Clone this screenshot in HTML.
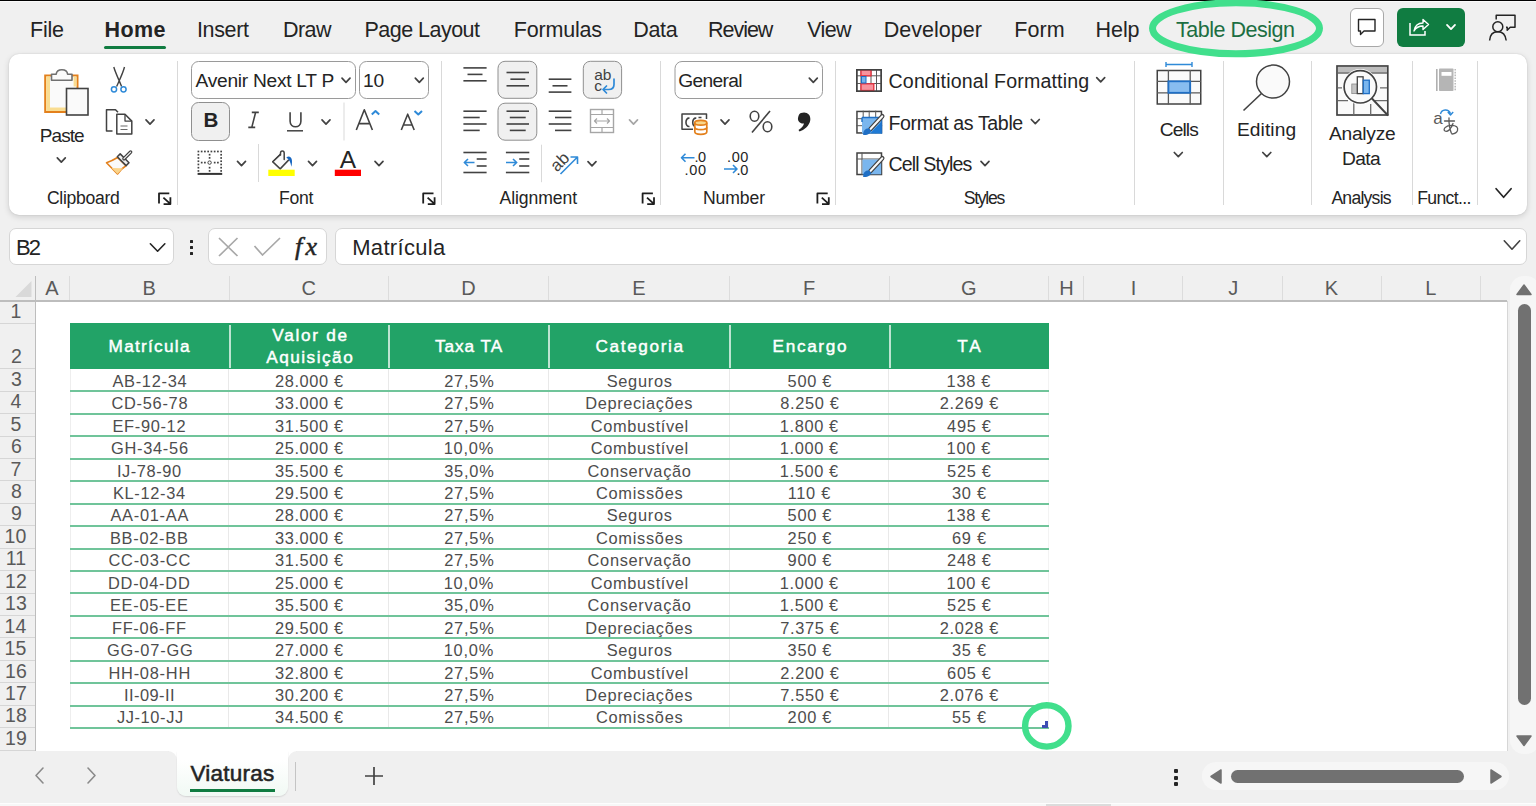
<!DOCTYPE html>
<html><head><meta charset="utf-8"><style>
html,body{margin:0;padding:0;}
body{width:1536px;height:806px;overflow:hidden;position:relative;background:#f0f0f0;font-family:"Liberation Sans", sans-serif;}
div{white-space:nowrap;line-height:normal;}
svg{overflow:visible;}
</style></head><body>
<div style="position:absolute;left:0px;top:0px;width:1536px;height:1px;background:#000"></div>
<div style="position:absolute;left:0px;top:1px;width:1536px;height:1px;background:#fafafa"></div>
<div style="position:absolute;left:104px;top:46px;width:62px;height:3px;background:#107c41;border-radius:2px"></div>
<div style="position:absolute;left:1349.5px;top:8.3px;width:34.5px;height:38.3px;background:#fff;border:1px solid #a8a8a8;border-radius:6px;box-sizing:border-box"></div>
<svg style="position:absolute;left:1357px;top:18px;" width="20" height="20" viewBox="0 0 20 20"><path d="M1.5 1.5 H18 V13 H7 L3.5 16.5 V13 H1.5 Z" fill="none" stroke="#242424" stroke-width="1.4" stroke-linejoin="round"/></svg>
<div style="position:absolute;left:1397px;top:8px;width:68px;height:39px;background:#107c41;border-radius:6px"></div>
<svg style="position:absolute;left:1407px;top:15px;" width="24" height="24" viewBox="0 0 24 24"><path d="M3 8 V20 H18 V16" fill="none" stroke="#fff" stroke-width="1.5"/><path d="M7 16 C8 10 12 8 16 8 V4.5 L21.5 9.5 L16 14.5 V11 C12 11 9 12.5 7 16 Z" fill="none" stroke="#fff" stroke-width="1.4" stroke-linejoin="round"/></svg>
<div style="position:absolute;left:9px;top:54px;width:1518px;height:161px;background:#fff;border-radius:10px;box-shadow:0 2px 6px rgba(0,0,0,0.14),0 0 1.5px rgba(0,0,0,0.14)"></div>
<div style="position:absolute;left:177.0px;top:61px;width:1px;height:144px;background:#d9d9d9"></div>
<div style="position:absolute;left:441.1px;top:61px;width:1px;height:144px;background:#d9d9d9"></div>
<div style="position:absolute;left:660.2px;top:61px;width:1px;height:144px;background:#d9d9d9"></div>
<div style="position:absolute;left:834.5px;top:61px;width:1px;height:144px;background:#d9d9d9"></div>
<div style="position:absolute;left:1134.2px;top:61px;width:1px;height:144px;background:#d9d9d9"></div>
<div style="position:absolute;left:1222.9px;top:61px;width:1px;height:144px;background:#d9d9d9"></div>
<div style="position:absolute;left:1310.9px;top:61px;width:1px;height:144px;background:#d9d9d9"></div>
<div style="position:absolute;left:1411.7px;top:61px;width:1px;height:144px;background:#d9d9d9"></div>
<div style="position:absolute;left:1477.3px;top:61px;width:1px;height:144px;background:#d9d9d9"></div>
<div style="position:absolute;left:9px;top:228px;width:165px;height:37px;background:#fff;border:1px solid #d6d6d6;border-radius:7px;box-sizing:border-box"></div>
<div style="position:absolute;left:208px;top:228px;width:119px;height:37px;background:#fff;border:1px solid #d6d6d6;border-radius:7px;box-sizing:border-box"></div>
<div style="position:absolute;left:334.5px;top:228px;width:1192.5px;height:37px;background:#fff;border:1px solid #d6d6d6;border-radius:7px;box-sizing:border-box"></div>
<div style="position:absolute;left:0px;top:265px;width:1508px;height:36px;background:#f0f0f0"></div>
<div style="position:absolute;left:36px;top:301px;width:1471px;height:450px;background:#fff"></div>
<div style="position:absolute;left:1506.5px;top:301px;width:1px;height:450px;background:#d6d6d6"></div>
<div style="position:absolute;left:0px;top:300px;width:1507px;height:1.5px;background:#bdbdbd"></div>
<svg style="position:absolute;left:14px;top:280px;" width="19" height="18" viewBox="0 0 19 18"><path d="M17.5 1 V17 H1.5 Z" fill="#d9d9d9"/></svg>
<div style="position:absolute;left:35px;top:276px;width:1px;height:1px;background:#333"></div>
<div style="position:absolute;left:35px;top:276px;width:1px;height:475px;background:#bdbdbd"></div>
<div style="position:absolute;left:69.2px;top:276px;width:1px;height:24px;background:#dcdcdc"></div>
<div style="position:absolute;left:228.7px;top:276px;width:1px;height:24px;background:#dcdcdc"></div>
<div style="position:absolute;left:388.2px;top:276px;width:1px;height:24px;background:#dcdcdc"></div>
<div style="position:absolute;left:548.2px;top:276px;width:1px;height:24px;background:#dcdcdc"></div>
<div style="position:absolute;left:729.2px;top:276px;width:1px;height:24px;background:#dcdcdc"></div>
<div style="position:absolute;left:888.7px;top:276px;width:1px;height:24px;background:#dcdcdc"></div>
<div style="position:absolute;left:1048.2px;top:276px;width:1px;height:24px;background:#dcdcdc"></div>
<div style="position:absolute;left:1083.2px;top:276px;width:1px;height:24px;background:#dcdcdc"></div>
<div style="position:absolute;left:1182.2px;top:276px;width:1px;height:24px;background:#dcdcdc"></div>
<div style="position:absolute;left:1282.2px;top:276px;width:1px;height:24px;background:#dcdcdc"></div>
<div style="position:absolute;left:1381.2px;top:276px;width:1px;height:24px;background:#dcdcdc"></div>
<div style="position:absolute;left:1480.2px;top:276px;width:1px;height:24px;background:#dcdcdc"></div>
<div style="position:absolute;left:0px;top:322.5px;width:35px;height:1px;background:#d6d6d6"></div>
<div style="position:absolute;left:0px;top:368.2px;width:35px;height:1px;background:#d6d6d6"></div>
<div style="position:absolute;left:0px;top:390.64px;width:35px;height:1px;background:#d6d6d6"></div>
<div style="position:absolute;left:0px;top:413.08px;width:35px;height:1px;background:#d6d6d6"></div>
<div style="position:absolute;left:0px;top:435.52px;width:35px;height:1px;background:#d6d6d6"></div>
<div style="position:absolute;left:0px;top:457.96px;width:35px;height:1px;background:#d6d6d6"></div>
<div style="position:absolute;left:0px;top:480.4px;width:35px;height:1px;background:#d6d6d6"></div>
<div style="position:absolute;left:0px;top:502.84px;width:35px;height:1px;background:#d6d6d6"></div>
<div style="position:absolute;left:0px;top:525.2800000000001px;width:35px;height:1px;background:#d6d6d6"></div>
<div style="position:absolute;left:0px;top:547.72px;width:35px;height:1px;background:#d6d6d6"></div>
<div style="position:absolute;left:0px;top:570.1600000000001px;width:35px;height:1px;background:#d6d6d6"></div>
<div style="position:absolute;left:0px;top:592.6px;width:35px;height:1px;background:#d6d6d6"></div>
<div style="position:absolute;left:0px;top:615.0400000000001px;width:35px;height:1px;background:#d6d6d6"></div>
<div style="position:absolute;left:0px;top:637.48px;width:35px;height:1px;background:#d6d6d6"></div>
<div style="position:absolute;left:0px;top:659.9200000000001px;width:35px;height:1px;background:#d6d6d6"></div>
<div style="position:absolute;left:0px;top:682.3600000000001px;width:35px;height:1px;background:#d6d6d6"></div>
<div style="position:absolute;left:0px;top:704.8000000000001px;width:35px;height:1px;background:#d6d6d6"></div>
<div style="position:absolute;left:0px;top:727.24px;width:35px;height:1px;background:#d6d6d6"></div>
<div style="position:absolute;left:0px;top:749.6800000000001px;width:35px;height:1px;background:#d6d6d6"></div>
<div style="position:absolute;left:70px;top:323.3px;width:979px;height:45.69999999999999px;background:#22a367"></div>
<div style="position:absolute;left:228.9px;top:324.5px;width:1.8px;height:43px;background:rgba(255,255,255,0.7)"></div>
<div style="position:absolute;left:228px;top:369px;width:1px;height:359px;background:#e9e9e9"></div>
<div style="position:absolute;left:388.4px;top:324.5px;width:1.8px;height:43px;background:rgba(255,255,255,0.7)"></div>
<div style="position:absolute;left:388px;top:369px;width:1px;height:359px;background:#e9e9e9"></div>
<div style="position:absolute;left:548.4px;top:324.5px;width:1.8px;height:43px;background:rgba(255,255,255,0.7)"></div>
<div style="position:absolute;left:548px;top:369px;width:1px;height:359px;background:#e9e9e9"></div>
<div style="position:absolute;left:729.4px;top:324.5px;width:1.8px;height:43px;background:rgba(255,255,255,0.7)"></div>
<div style="position:absolute;left:729px;top:369px;width:1px;height:359px;background:#e9e9e9"></div>
<div style="position:absolute;left:888.9px;top:324.5px;width:1.8px;height:43px;background:rgba(255,255,255,0.7)"></div>
<div style="position:absolute;left:888px;top:369px;width:1px;height:359px;background:#e9e9e9"></div>
<div style="position:absolute;left:70px;top:369px;width:1px;height:359px;background:#eeeeee"></div>
<div style="position:absolute;left:1048px;top:369px;width:1px;height:359px;background:#f3f3f3"></div>
<div style="position:absolute;left:70px;top:390px;width:979px;height:2px;background:#70c49a"></div>
<div style="position:absolute;left:70px;top:413px;width:979px;height:2px;background:#70c49a"></div>
<div style="position:absolute;left:70px;top:435px;width:979px;height:2px;background:#70c49a"></div>
<div style="position:absolute;left:70px;top:458px;width:979px;height:2px;background:#70c49a"></div>
<div style="position:absolute;left:70px;top:480px;width:979px;height:2px;background:#70c49a"></div>
<div style="position:absolute;left:70px;top:503px;width:979px;height:2px;background:#70c49a"></div>
<div style="position:absolute;left:70px;top:525px;width:979px;height:2px;background:#70c49a"></div>
<div style="position:absolute;left:70px;top:548px;width:979px;height:2px;background:#70c49a"></div>
<div style="position:absolute;left:70px;top:570px;width:979px;height:2px;background:#70c49a"></div>
<div style="position:absolute;left:70px;top:592px;width:979px;height:2px;background:#70c49a"></div>
<div style="position:absolute;left:70px;top:615px;width:979px;height:2px;background:#70c49a"></div>
<div style="position:absolute;left:70px;top:637px;width:979px;height:2px;background:#70c49a"></div>
<div style="position:absolute;left:70px;top:660px;width:979px;height:2px;background:#70c49a"></div>
<div style="position:absolute;left:70px;top:682px;width:979px;height:2px;background:#70c49a"></div>
<div style="position:absolute;left:70px;top:705px;width:979px;height:2px;background:#70c49a"></div>
<div style="position:absolute;left:70px;top:727px;width:979px;height:2px;background:#70c49a"></div>
<div style="position:absolute;left:36px;top:750.5px;width:1471px;height:1px;background:#e3e3e3"></div>
<div style="position:absolute;left:169px;top:751px;width:127px;height:10px;background:#fff"></div>
<div style="position:absolute;left:0px;top:751px;width:177px;height:52px;background:#f0f0f0;border-top-right-radius:9px"></div>
<div style="position:absolute;left:288px;top:751px;width:1248px;height:52px;background:#f0f0f0;border-top-left-radius:9px"></div>
<div style="position:absolute;left:177px;top:751px;width:111px;height:45px;background:linear-gradient(#ffffff 0%,#ffffff 20%,#f1f9f4 100%);border-radius:0 0 9px 9px;box-shadow:0 1px 1.5px rgba(0,0,0,0.12)"></div>
<div style="position:absolute;left:190px;top:788.8px;width:85px;height:3px;background:#107c41"></div>
<svg style="position:absolute;left:33px;top:766px;" width="12" height="19" viewBox="0 0 12 19"><path d="M10 2 L3 9.5 L10 17" fill="none" stroke="#8a8a8a" stroke-width="1.6" stroke-linecap="round" stroke-linejoin="round"/></svg>
<svg style="position:absolute;left:86px;top:766px;" width="12" height="19" viewBox="0 0 12 19"><path d="M2 2 L9 9.5 L2 17" fill="none" stroke="#8a8a8a" stroke-width="1.6" stroke-linecap="round" stroke-linejoin="round"/></svg>
<div style="position:absolute;left:295px;top:762px;width:1px;height:29px;background:#c4c4c4"></div>
<svg style="position:absolute;left:363px;top:765px;" width="22" height="22" viewBox="0 0 22 22"><path d="M11 2 V20 M2 11 H20" fill="none" stroke="#424242" stroke-width="1.7"/></svg>
<div style="position:absolute;left:0px;top:803px;width:1536px;height:1px;background:#fdfdfd"></div>
<div style="position:absolute;left:0px;top:804px;width:1536px;height:2px;background:#f7f7f7"></div>
<div style="position:absolute;left:1046px;top:804px;width:65px;height:2px;background:#dcdcdc"></div>
<div style="position:absolute;left:1174px;top:769.2px;width:3.8px;height:3.8px;background:#242424;border-radius:1px"></div>
<div style="position:absolute;left:1174px;top:775.8px;width:3.8px;height:3.8px;background:#242424;border-radius:1px"></div>
<div style="position:absolute;left:1174px;top:782.4px;width:3.8px;height:3.8px;background:#242424;border-radius:1px"></div>
<div style="position:absolute;left:1202px;top:762px;width:307px;height:28px;background:#f6f6f6;border-radius:14px"></div>
<div style="position:absolute;left:1230.5px;top:770px;width:233px;height:12.5px;background:#717171;border-radius:6.5px"></div>
<svg style="position:absolute;left:1208px;top:768px;" width="16" height="17" viewBox="0 0 16 17"><path d="M13 2 V15 L3 8.5 Z" fill="#717171" stroke="#717171" stroke-width="1.5" stroke-linejoin="round"/></svg>
<svg style="position:absolute;left:1488px;top:768px;" width="16" height="17" viewBox="0 0 16 17"><path d="M3 2 V15 L13 8.5 Z" fill="#717171" stroke="#717171" stroke-width="1.5" stroke-linejoin="round"/></svg>
<div style="position:absolute;left:1510px;top:276px;width:30px;height:478px;background:#f6f6f6;border-radius:14px"></div>
<div style="position:absolute;left:1517.5px;top:304px;width:13px;height:401px;background:#717171;border-radius:6.5px"></div>
<svg style="position:absolute;left:1514px;top:282px;" width="20" height="16" viewBox="0 0 20 16"><path d="M3 12.5 H17 L10 3 Z" fill="#717171" stroke="#717171" stroke-width="1.5" stroke-linejoin="round"/></svg>
<svg style="position:absolute;left:1514px;top:733px;" width="20" height="16" viewBox="0 0 20 16"><path d="M3 3 H17 L10 12.5 Z" fill="#717171" stroke="#717171" stroke-width="1.5" stroke-linejoin="round"/></svg>
<svg style="position:absolute;left:1140px;top:0px;" width="200" height="65" viewBox="0 0 200 65"><ellipse cx="96" cy="28.3" rx="83.5" ry="25.5" fill="none" stroke="#41df8c" stroke-width="7"/></svg>
<div style="position:absolute;left:1041.6px;top:724.8px;width:6.6px;height:3.2px;background:#3d4db3"></div>
<div style="position:absolute;left:1045px;top:721.4px;width:3.2px;height:6.6px;background:#3d4db3"></div>
<svg style="position:absolute;left:1020px;top:700px;" width="54" height="54" viewBox="0 0 54 54"><ellipse cx="26.8" cy="25.9" rx="21.7" ry="20.7" fill="none" stroke="#41df8c" stroke-width="6.4"/></svg>
<div style="position:absolute;left:189.5px;top:239.5px;width:3.5px;height:3.5px;background:#242424;border-radius:0.5px"></div>
<div style="position:absolute;left:189.5px;top:245.5px;width:3.5px;height:3.5px;background:#242424;border-radius:0.5px"></div>
<div style="position:absolute;left:189.5px;top:251.5px;width:3.5px;height:3.5px;background:#242424;border-radius:0.5px"></div>
<svg style="position:absolute;left:0;top:0" width="1536" height="806"><path d="M1447.00 24.90 L1451.00 29.10 L1455.00 24.90" fill="none" stroke="#fff" stroke-width="1.8" stroke-linecap="round" stroke-linejoin="round"/><g fill="none" stroke="#242424" stroke-width="1.5" stroke-linejoin="round"><circle cx="1497.8" cy="26.8" r="5"/><path d="M1489.6 40.5 C1490 34.5 1493.5 31.8 1497.8 31.8 C1502 31.8 1505.5 34.5 1506.2 40.5"/><path d="M1496.2 19.5 V15.3 H1515 V27.2 H1510.2 L1507.2 30.2 V27.2 H1506"/></g><path d="M150.35 243.75 L157.60 251.25 L164.85 243.75" fill="none" stroke="#242424" stroke-width="1.6" stroke-linecap="round" stroke-linejoin="round"/><path d="M1504.25 240.75 L1512.00 249.25 L1519.75 240.75" fill="none" stroke="#424242" stroke-width="1.6" stroke-linecap="round" stroke-linejoin="round"/><path d="M219 238 L237.5 256 M237.5 238 L219 256" stroke="#a8a8a8" stroke-width="1.7" fill="none"/><path d="M254.5 246 L262.5 255 L280 238" stroke="#a8a8a8" stroke-width="1.7" fill="none" stroke-linejoin="round"/><path d="M159 203.6 V193.4 H169.3 M163.4 197.7 L170.3 203.9 M170.4 197.3 V204.1 H163.6" stroke="#1e1e1e" stroke-width="1.8" fill="none" stroke-linejoin="round" /><path d="M423.2 203.6 V193.4 H433.5 M427.59999999999997 197.7 L434.5 203.9 M434.59999999999997 197.3 V204.1 H427.8" stroke="#1e1e1e" stroke-width="1.8" fill="none" stroke-linejoin="round" /><path d="M642.6 203.6 V193.4 H652.9 M647.0 197.7 L653.9 203.9 M654.0 197.3 V204.1 H647.2" stroke="#1e1e1e" stroke-width="1.8" fill="none" stroke-linejoin="round" /><path d="M817.4 203.6 V193.4 H827.6999999999999 M821.8 197.7 L828.6999999999999 203.9 M828.8 197.3 V204.1 H822.0" stroke="#1e1e1e" stroke-width="1.8" fill="none" stroke-linejoin="round" /><rect x="45.2" y="75.5" width="32.3" height="36.5" rx="0" stroke="#e3801c" stroke-width="2" fill="#fafafa"/><path d="M46.2 76.5 H50 V107.6 H66 V111 H46.2 Z M73.6 76.5 H76.5 V86.5 H73.6 Z" fill="#f9dd92"/><path d="M51.5 80.2 V74.2 H56.2 C56.8 68.2 67 68.2 67.6 74.2 H72 V80.2 Z" stroke="#707070" stroke-width="1.6" fill="#fafafa" stroke-linejoin="round" /><rect x="66.5" y="88.5" width="21.5" height="26.5" rx="0" stroke="#424242" stroke-width="1.6" fill="#fafafa"/><path d="M57.30 157.90 L61.30 162.10 L65.30 157.90" fill="none" stroke="#424242" stroke-width="1.7" stroke-linecap="round" stroke-linejoin="round"/><path d="M113.8 67 C115.5 73 119 80 121.6 86.5 M124.5 67 C123 73 119.5 80 116.6 86.5" stroke="#424242" stroke-width="1.4" fill="none" stroke-linejoin="round" /><circle cx="114" cy="89.3" r="2.6" stroke="#2f8ad8" stroke-width="1.5" fill="none"/><circle cx="123.5" cy="89.3" r="2.6" stroke="#2f8ad8" stroke-width="1.5" fill="none"/><path d="M112.5 131 H106.5 V109.8 H115.5 L118 112.3" stroke="#424242" stroke-width="1.5" fill="none" stroke-linejoin="round" /><path d="M116.8 114.3 H125 L131.8 121.1 V134 H116.8 Z" stroke="#424242" stroke-width="1.5" fill="#fff" stroke-linejoin="round" /><path d="M125 114.3 V121.1 H131.8" stroke="#424242" stroke-width="1.3" fill="none" stroke-linejoin="round" /><path d="M120.5 126 H127.5 M120.5 129.5 H127.5" stroke="#6a6a6a" stroke-width="1.1" fill="none" stroke-linejoin="round" /><path d="M146.00 119.90 L150.00 124.10 L154.00 119.90" fill="none" stroke="#424242" stroke-width="1.7" stroke-linecap="round" stroke-linejoin="round"/><path d="M117.5 157.5 C113.5 160 110 161.5 106.5 162.8 L117.5 174 C119.5 171 122.5 168 126 165.8 Z" stroke="#e3801c" stroke-width="1.6" fill="#fafafa" stroke-linejoin="round" /><path d="M111.5 168 L117.5 174 L123 168.3 Z" stroke="#424242" stroke-width="0" fill="#fad48b" stroke-linejoin="round" /><path d="M117.3 156.8 L120.2 153.9 L129 162.7 L126.1 165.6 Z" stroke="#424242" stroke-width="1.5" fill="#f0f0f0" stroke-linejoin="round" /><path d="M124 158.7 L130.6 152.1" stroke="#424242" stroke-width="3.6" fill="none" stroke-linejoin="round" stroke-linecap="round"/><path d="M124 158.7 L130.6 152.1" stroke="#f5f5f5" stroke-width="1.2" fill="none" stroke-linejoin="round" stroke-linecap="round"/><rect x="191.5" y="61.5" width="164" height="37" rx="7" stroke="#9a9a9a" stroke-width="1" fill="#fff"/><path d="M342.00 78.20 L346.00 82.40 L350.00 78.20" fill="none" stroke="#424242" stroke-width="1.7" stroke-linecap="round" stroke-linejoin="round"/><rect x="359.5" y="61.5" width="69" height="37" rx="7" stroke="#9a9a9a" stroke-width="1" fill="#fff"/><path d="M415.30 78.20 L419.30 82.40 L423.30 78.20" fill="none" stroke="#424242" stroke-width="1.7" stroke-linecap="round" stroke-linejoin="round"/><rect x="191.5" y="102.5" width="38" height="38" rx="7" stroke="#8f8f8f" stroke-width="1" fill="#f0f0f0"/><path d="M251.8 112.4 H258.8 M248.3 127.4 H255.2 M255.6 112.4 L251.8 127.4" stroke="#424242" stroke-width="1.6" fill="none" stroke-linejoin="round" /><path d="M290.1 112.2 V121.3 C290.1 128.6 300.9 128.6 300.9 121.3 V112.2" stroke="#424242" stroke-width="1.6" fill="none" stroke-linejoin="round" /><path d="M287 130.8 H303" stroke="#424242" stroke-width="1.5" fill="none" stroke-linejoin="round" /><path d="M322.00 119.90 L326.00 124.10 L330.00 119.90" fill="none" stroke="#424242" stroke-width="1.7" stroke-linecap="round" stroke-linejoin="round"/><rect x="343.5" y="102.5" width="1" height="38" fill="#d9d9d9"/><path d="M356.3 130 L364.3 109.8 L372.4 130 M358.9 123.6 H369.8" stroke="#424242" stroke-width="1.6" fill="none" stroke-linejoin="round" /><path d="M371.8 114.5 L375.5 111 L379.2 114.5" stroke="#2f8ad8" stroke-width="2" fill="none" stroke-linejoin="round" /><path d="M401.3 130 L407.7 114.2 L414.2 130 M403.4 125 H412.1" stroke="#424242" stroke-width="1.6" fill="none" stroke-linejoin="round" /><path d="M414.5 111 L418.3 114.5 L422 111" stroke="#2f8ad8" stroke-width="2" fill="none" stroke-linejoin="round" /><rect x="197.55" y="150.65" width="1.7" height="1.7" fill="#424242"/><rect x="200.80" y="150.65" width="1.7" height="1.7" fill="#424242"/><rect x="204.05" y="150.65" width="1.7" height="1.7" fill="#424242"/><rect x="207.30" y="150.65" width="1.7" height="1.7" fill="#424242"/><rect x="210.55" y="150.65" width="1.7" height="1.7" fill="#424242"/><rect x="213.80" y="150.65" width="1.7" height="1.7" fill="#424242"/><rect x="217.05" y="150.65" width="1.7" height="1.7" fill="#424242"/><rect x="220.30" y="150.65" width="1.7" height="1.7" fill="#424242"/><rect x="197.55" y="153.89" width="1.7" height="1.7" fill="#424242"/><rect x="220.30" y="153.89" width="1.7" height="1.7" fill="#424242"/><rect x="197.55" y="157.13" width="1.7" height="1.7" fill="#424242"/><rect x="220.30" y="157.13" width="1.7" height="1.7" fill="#424242"/><rect x="197.55" y="160.37" width="1.7" height="1.7" fill="#424242"/><rect x="220.30" y="160.37" width="1.7" height="1.7" fill="#424242"/><rect x="197.55" y="163.61" width="1.7" height="1.7" fill="#424242"/><rect x="220.30" y="163.61" width="1.7" height="1.7" fill="#424242"/><rect x="197.55" y="166.85" width="1.7" height="1.7" fill="#424242"/><rect x="220.30" y="166.85" width="1.7" height="1.7" fill="#424242"/><rect x="197.55" y="170.09" width="1.7" height="1.7" fill="#424242"/><rect x="220.30" y="170.09" width="1.7" height="1.7" fill="#424242"/><rect x="208.75" y="153.85" width="1.7" height="1.7" fill="#424242"/><rect x="208.75" y="157.05" width="1.7" height="1.7" fill="#424242"/><rect x="208.75" y="166.85" width="1.7" height="1.7" fill="#424242"/><rect x="208.75" y="170.05" width="1.7" height="1.7" fill="#424242"/><rect x="200.85" y="161.75" width="1.7" height="1.7" fill="#424242"/><rect x="204.05" y="161.75" width="1.7" height="1.7" fill="#424242"/><rect x="213.85" y="161.75" width="1.7" height="1.7" fill="#424242"/><rect x="217.05" y="161.75" width="1.7" height="1.7" fill="#424242"/><rect x="197.6" y="172.9" width="24.6" height="2" fill="#333"/><circle cx="209.6" cy="162.6" r="1.7" fill="#fff" stroke="#424242" stroke-width="1"/><path d="M237.50 161.40 L241.50 165.60 L245.50 161.40" fill="none" stroke="#424242" stroke-width="1.7" stroke-linecap="round" stroke-linejoin="round"/><rect x="258" y="144" width="1" height="38" fill="#d9d9d9"/><path d="M280.5 154.4 L272.8 161.8 L280.2 168.8 L288.8 159.8" stroke="#424242" stroke-width="1.5" fill="none" stroke-linejoin="round" /><path d="M280.5 154.4 L272.8 161.8 L280.2 168.8 L288.8 159.8 L284.2 155.5 Z" fill="#fafafa"/><path d="M280.5 154.4 L272.8 161.8 L280.2 168.8 L288.8 159.8" stroke="#424242" stroke-width="1.5" fill="none" stroke-linejoin="round" /><path d="M280.5 155 V153.2 C280.5 150.3 284.2 150.3 284.2 153.2 V159.6" stroke="#424242" stroke-width="1.5" fill="none" stroke-linejoin="round" stroke-linecap="round"/><path d="M286.3 157.6 C289.5 154.6 293.8 157.5 291.3 166.8 C290.6 162.5 289.6 159.6 286.3 157.6 Z" stroke="#424242" stroke-width="0" fill="#1565c0" stroke-linejoin="round" /><rect x="268.3" y="169.7" width="26.4" height="6.3" fill="#ffff00"/><path d="M308.50 161.40 L312.50 165.60 L316.50 161.40" fill="none" stroke="#424242" stroke-width="1.7" stroke-linecap="round" stroke-linejoin="round"/><rect x="334.8" y="169.7" width="26.2" height="6.3" fill="#ff0000"/><path d="M375.00 161.40 L379.00 165.60 L383.00 161.40" fill="none" stroke="#424242" stroke-width="1.7" stroke-linecap="round" stroke-linejoin="round"/><rect x="463.4" y="67.10000000000001" width="23.200000000000045" height="1.6" fill="#424242"/><rect x="463.4" y="80.0" width="23.200000000000045" height="1.6" fill="#424242"/><rect x="467.5" y="73.60000000000001" width="15.0" height="1.6" fill="#424242"/><rect x="498" y="61.3" width="38.8" height="37" rx="7" stroke="#8f8f8f" stroke-width="1" fill="#f0f0f0"/><rect x="506.5" y="71.7" width="22.5" height="1.6" fill="#424242"/><rect x="506.5" y="85.0" width="22.5" height="1.6" fill="#424242"/><rect x="510.4" y="78.4" width="14.899999999999977" height="1.6" fill="#424242"/><rect x="548.7" y="78.4" width="22.699999999999932" height="1.6" fill="#424242"/><rect x="548.7" y="91.3" width="22.699999999999932" height="1.6" fill="#424242"/><rect x="552.5" y="85.0" width="15.0" height="1.6" fill="#424242"/><rect x="583.3" y="61.3" width="38.3" height="37" rx="7" stroke="#8f8f8f" stroke-width="1" fill="#f0f0f0"/><path d="M614 79 V84.5 C614 88 611.5 89.5 608.5 89.5 H603.5 M606.5 86 L603 89.5 L606.5 93" stroke="#2f8ad8" stroke-width="1.7" fill="none" stroke-linejoin="round" stroke-linecap="round"/><rect x="463.4" y="110.4" width="23.200000000000045" height="1.6" fill="#424242"/><rect x="463.4" y="123.2" width="23.200000000000045" height="1.6" fill="#424242"/><rect x="463.4" y="116.7" width="16.30000000000001" height="1.6" fill="#424242"/><rect x="463.4" y="129.6" width="16.30000000000001" height="1.6" fill="#424242"/><rect x="498" y="103.2" width="38.8" height="37" rx="7" stroke="#8f8f8f" stroke-width="1" fill="#f0f0f0"/><rect x="506.5" y="110.4" width="22.5" height="1.6" fill="#424242"/><rect x="506.5" y="123.2" width="22.5" height="1.6" fill="#424242"/><rect x="509.8" y="116.7" width="15.900000000000034" height="1.6" fill="#424242"/><rect x="509.8" y="129.6" width="15.900000000000034" height="1.6" fill="#424242"/><rect x="548.7" y="110.4" width="22.699999999999932" height="1.6" fill="#424242"/><rect x="548.7" y="123.2" width="22.699999999999932" height="1.6" fill="#424242"/><rect x="555" y="116.7" width="16.399999999999977" height="1.6" fill="#424242"/><rect x="555" y="129.6" width="16.399999999999977" height="1.6" fill="#424242"/><rect x="590.5" y="109.5" width="23" height="23" rx="0" stroke="#a6a6a6" stroke-width="1.4" fill="none"/><path d="M590.5 114.5 H613.5 M590.5 127.5 H613.5 M602 109.5 V114.5 M602 127.5 V132.5" stroke="#a6a6a6" stroke-width="1.2" fill="none" stroke-linejoin="round" /><path d="M594.5 121 H609.5 M597 118.5 L594.5 121 L597 123.5 M607 118.5 L609.5 121 L607 123.5" stroke="#a6a6a6" stroke-width="1.2" fill="none" stroke-linejoin="round" /><path d="M629.50 119.90 L633.50 124.10 L637.50 119.90" fill="none" stroke="#a6a6a6" stroke-width="1.7" stroke-linecap="round" stroke-linejoin="round"/><rect x="463.4" y="151.7" width="23.200000000000045" height="1.6" fill="#424242"/><rect x="463.4" y="171.7" width="23.200000000000045" height="1.6" fill="#424242"/><rect x="476.7" y="158.2" width="9.900000000000034" height="1.6" fill="#424242"/><rect x="476.7" y="165.2" width="9.900000000000034" height="1.6" fill="#424242"/><path d="M464 162.5 H474.5 M468 159 L464.3 162.5 L468 166" stroke="#2f8ad8" stroke-width="1.6" fill="none" stroke-linejoin="round" /><rect x="505.9" y="151.7" width="23.399999999999977" height="1.6" fill="#424242"/><rect x="505.9" y="171.7" width="23.399999999999977" height="1.6" fill="#424242"/><rect x="519.2" y="158.2" width="10.099999999999909" height="1.6" fill="#424242"/><rect x="519.2" y="165.2" width="10.099999999999909" height="1.6" fill="#424242"/><path d="M506 162.5 H516.5 M513 159 L516.7 162.5 L513 166" stroke="#2f8ad8" stroke-width="1.6" fill="none" stroke-linejoin="round" /><rect x="541" y="144.7" width="1" height="37.5" fill="#d9d9d9"/><text x="0" y="0" font-family="Liberation Sans" font-size="17" fill="#424242" transform="translate(557 172.5) rotate(-45)">ab</text><path d="M560.5 174 L577 157.5 M570.5 157 H577.5 V164" stroke="#2f8ad8" stroke-width="1.6" fill="none" stroke-linejoin="round" /><path d="M588.00 161.60 L592.00 165.80 L596.00 161.60" fill="none" stroke="#424242" stroke-width="1.7" stroke-linecap="round" stroke-linejoin="round"/><rect x="675" y="61.5" width="147.5" height="37" rx="7" stroke="#9a9a9a" stroke-width="1" fill="#fff"/><path d="M809.30 78.20 L813.30 82.40 L817.30 78.20" fill="none" stroke="#424242" stroke-width="1.7" stroke-linecap="round" stroke-linejoin="round"/><path d="M693 129.3 H682 V114 H706.5 V119" stroke="#424242" stroke-width="1.5" fill="none" stroke-linejoin="round" /><path d="M689.5 118.2 C684.8 117.3 684.8 127.2 689.5 126.5 M696.3 118.2 C691.6 117.3 691.6 127.2 696 126.5 M698.5 117.5 H701.5" stroke="#424242" stroke-width="1.6" fill="none" stroke-linejoin="round" /><g stroke="#e3801c" stroke-width="1.7" fill="#fff"><path d="M694.8 122.8 V131.8 C694.8 135.2 706.8 135.2 706.8 131.8 V122.8"/><ellipse cx="700.8" cy="122.8" rx="6" ry="2.4" fill="#f9d68a"/><path d="M694.8 127.3 C694.8 130.4 706.8 130.4 706.8 127.3" fill="none"/></g><path d="M721.00 119.90 L725.00 124.10 L729.00 119.90" fill="none" stroke="#424242" stroke-width="1.7" stroke-linecap="round" stroke-linejoin="round"/><g stroke="#424242" stroke-width="1.6" fill="none"><ellipse cx="754.5" cy="116.3" rx="4.3" ry="5"/><ellipse cx="767.5" cy="126.8" rx="4.3" ry="5"/><path d="M770 111 L752 132.5"/></g><path d="M801 113 C806 111 811 114 810.3 120 C809.5 126 804 130 799.5 131.5 L798.5 130 C801.5 128 803.5 126 804 123.5 C800 124 797.5 121 798 118 C798.5 115 799.5 113.5 801 113 Z" stroke="#424242" stroke-width="0" fill="#242424" stroke-linejoin="round" /><path d="M681.5 157.8 H694.5 M685.5 153.8 L681.5 157.8 L685.5 161.8" stroke="#2f8ad8" stroke-width="1.6" fill="none" stroke-linejoin="round" /><path d="M724 169 H737 M733 165 L737 169 L733 173" stroke="#2f8ad8" stroke-width="1.6" fill="none" stroke-linejoin="round" /><rect x="856.75" y="69.75" width="24.5" height="21.5" rx="0" stroke="#424242" stroke-width="1.5" fill="#fff"/><path d="M856 75.8 H882 M856 83.5 H882 M861 69 V91.5 M871 69 V91.5 M876.5 69 V91.5" stroke="#5a5a5a" stroke-width="1" fill="none" stroke-linejoin="round" /><rect x="861" y="70" width="10" height="5.8" fill="#f7939d" stroke="#e8303d" stroke-width="1.3"/><rect x="861" y="83.8" width="12.8" height="6.7" fill="#f7939d" stroke="#e8303d" stroke-width="1.3"/><rect x="861.5" y="76.5" width="4.5" height="6.5" fill="#79b3ea" stroke="#1f6fc5" stroke-width="1"/><path d="M856.75 69.75 H881.25 V91.25 H856.75 Z" stroke="#424242" stroke-width="1.5" fill="none" stroke-linejoin="round" /><path d="M1096.70 77.60 L1100.70 81.80 L1104.70 77.60" fill="none" stroke="#424242" stroke-width="1.7" stroke-linecap="round" stroke-linejoin="round"/><rect x="856.95" y="111.45" width="24.5" height="21.5" rx="0" stroke="#424242" stroke-width="1.5" fill="#fff"/><path d="M856.2 118.7 H882.2 M856.2 125.7 H882.2 M863.2 110.7 V133.7 M869.2 110.7 V133.7 M875.7 110.7 V133.7" stroke="#5a5a5a" stroke-width="1" fill="none" stroke-linejoin="round" /><path d="M862 117.5 H882 V133.5 H862 Z" fill="#7ab6ee"/><path d="M882 121 V133.5 H870 Z" fill="#1f7ad4"/><path d="M862 117.5 H881.5 V133.5 M862 117.5 V122" stroke="#1f6fc5" stroke-width="1.4" fill="none" stroke-linejoin="round" /><path d="M870.5 129 L882.3 116.2" stroke="#424242" stroke-width="4.4" fill="none" stroke-linejoin="round" stroke-linecap="round"/><path d="M870.5 129 L882.3 116.2" stroke="#fafafa" stroke-width="2" fill="none" stroke-linejoin="round" stroke-linecap="round"/><path d="M863.2 135 C862.8 131.5 865 128.3 868.8 128.3 L871.2 130.6 C871 133.5 867.5 135.5 863.2 135 Z" stroke="#424242" stroke-width="0" fill="#1f6fc5" stroke-linejoin="round" /><path d="M1031.30 119.50 L1035.30 123.70 L1039.30 119.50" fill="none" stroke="#424242" stroke-width="1.7" stroke-linecap="round" stroke-linejoin="round"/><rect x="857" y="153" width="24.5" height="21.5" rx="0" stroke="#424242" stroke-width="1.5" fill="#fff"/><path d="M856.5 159 H882 M862 152.5 V175" stroke="#5a5a5a" stroke-width="1.1" fill="none" stroke-linejoin="round" /><path d="M862.5 159.5 H881.2 V174.3 H862.5 Z" fill="#7ab6ee"/><path d="M870.5 171 L882.3 158.2" stroke="#424242" stroke-width="4.4" fill="none" stroke-linejoin="round" stroke-linecap="round"/><path d="M870.5 171 L882.3 158.2" stroke="#fafafa" stroke-width="2" fill="none" stroke-linejoin="round" stroke-linecap="round"/><path d="M863.2 177 C862.8 173.5 865 170.3 868.8 170.3 L871.2 172.6 C871 175.5 867.5 177.5 863.2 177 Z" stroke="#424242" stroke-width="0" fill="#1f6fc5" stroke-linejoin="round" /><path d="M981.00 161.40 L985.00 165.60 L989.00 161.40" fill="none" stroke="#424242" stroke-width="1.7" stroke-linecap="round" stroke-linejoin="round"/><rect x="1157.25" y="70.5" width="43.5" height="33.5" rx="0" stroke="#424242" stroke-width="1.5" fill="#fafafa"/><rect x="1168.5" y="81.3" width="21.7" height="11.5" fill="#88bdf0"/><path d="M1157 81.3 H1201 M1157 92.8 H1201 M1168.4 70 V104.5 M1190.2 70 V104.5" stroke="#5a5a5a" stroke-width="1.3" fill="none" stroke-linejoin="round" /><rect x="1168.4" y="81.3" width="21.8" height="11.5" rx="0" stroke="#1f6fc5" stroke-width="1.8" fill="none"/><path d="M1166 64.5 H1192 M1166 62 V67 M1192 62 V67" stroke="#2f8ad8" stroke-width="1.4" fill="none" stroke-linejoin="round" /><path d="M1174.30 152.50 L1178.30 156.70 L1182.30 152.50" fill="none" stroke="#424242" stroke-width="1.7" stroke-linecap="round" stroke-linejoin="round"/><circle cx="1273" cy="81.6" r="16.5" stroke="#424242" stroke-width="1.5" fill="#fafafa"/><path d="M1243.5 110.5 L1261.5 93.5" stroke="#424242" stroke-width="1.6" fill="none" stroke-linejoin="round" /><path d="M1262.80 152.50 L1266.80 156.70 L1270.80 152.50" fill="none" stroke="#424242" stroke-width="1.7" stroke-linecap="round" stroke-linejoin="round"/><rect x="1337" y="66" width="50.8" height="49" rx="0" stroke="#424242" stroke-width="1.7" fill="#fafafa"/><rect x="1338" y="67" width="49" height="5.5" fill="#bdbdbd"/><path d="M1338 73 H1387 M1338 87.8 H1342 M1380 87.8 H1387 M1338 100.7 H1348 M1375 100.7 H1387 M1353.8 100.7 V115 M1370.7 104 V115" stroke="#6a6a6a" stroke-width="1.3" fill="none" stroke-linejoin="round" /><circle cx="1360.3" cy="86.8" r="17.8" fill="#fff"/><circle cx="1360.3" cy="86.8" r="16.2" stroke="#424242" stroke-width="1.7" fill="#fafafa"/><rect x="1351.8" y="84" width="5.5" height="9.6" fill="#c4c4c4" stroke="#8a8a8a" stroke-width="0.8"/><rect x="1357.3" y="76.8" width="5.8" height="16.8" fill="#fff" stroke="#424242" stroke-width="1.3"/><rect x="1363.3" y="80.2" width="6" height="13.4" fill="#7ab6ee" stroke="#1f6fc5" stroke-width="1.3"/><path d="M1371.5 98 L1388 115.5" stroke="#424242" stroke-width="1.9" fill="none" stroke-linejoin="round" /><rect x="1436" y="69" width="1.6" height="22" fill="#b0b0b0"/><rect x="1439" y="68.5" width="14.5" height="22.5" rx="0.8" fill="#b5b5b5"/><rect x="1441.5" y="72" width="10" height="3.8" fill="#fff"/><path d="M1455.2 69 V91" stroke="#b5b5b5" stroke-width="1.4" stroke-dasharray="1.6 1.2"/><path d="M1444.5 121.0 H1454.5 M1449.0 118.0 C1448.8 123.5 1449.5 128.5 1451.3 133.0 M1453.0 123.5 C1451.5 128.5 1447.5 132.5 1445.0 131.0 C1442.5 129.5 1445.5 125.3 1451.5 125.3 C1456.5 125.3 1458.3 127.5 1457.5 130.5 C1456.7 133.0 1454.0 133.8 1452.0 134.0" stroke="#5a5a5a" stroke-width="1.3" fill="none" stroke-linejoin="round" stroke-linecap="round"/><path d="M1440.5 114 C1441.5 109 1448.5 108.5 1450.5 113.5 M1447.8 112 L1450.5 115 L1453.2 112" stroke="#2f8ad8" stroke-width="1.4" fill="none" stroke-linejoin="round" /><path d="M1496.10 188.75 L1503.60 197.25 L1511.10 188.75" fill="none" stroke="#242424" stroke-width="1.7" stroke-linecap="round" stroke-linejoin="round"/></svg>
<div style="position:absolute;left:30.00px;top:17.54px;font-size:21.5px;font-weight:normal;color:#242424;letter-spacing:-0.229px;">File</div>
<div style="position:absolute;left:104.50px;top:17.54px;font-size:21.5px;font-weight:bold;color:#242424;letter-spacing:0.408px;">Home</div>
<div style="position:absolute;left:197.00px;top:17.54px;font-size:21.5px;font-weight:normal;color:#242424;letter-spacing:-0.360px;">Insert</div>
<div style="position:absolute;left:283.00px;top:17.54px;font-size:21.5px;font-weight:normal;color:#242424;letter-spacing:-0.548px;">Draw</div>
<div style="position:absolute;left:364.50px;top:17.54px;font-size:21.5px;font-weight:normal;color:#242424;letter-spacing:-0.526px;">Page Layout</div>
<div style="position:absolute;left:513.80px;top:17.54px;font-size:21.5px;font-weight:normal;color:#242424;letter-spacing:-0.193px;">Formulas</div>
<div style="position:absolute;left:633.30px;top:17.54px;font-size:21.5px;font-weight:normal;color:#242424;letter-spacing:-0.352px;">Data</div>
<div style="position:absolute;left:708.10px;top:17.54px;font-size:21.5px;font-weight:normal;color:#242424;letter-spacing:-1.054px;">Review</div>
<div style="position:absolute;left:807.30px;top:17.54px;font-size:21.5px;font-weight:normal;color:#242424;letter-spacing:-0.662px;">View</div>
<div style="position:absolute;left:883.80px;top:17.54px;font-size:21.5px;font-weight:normal;color:#242424;letter-spacing:0.020px;">Developer</div>
<div style="position:absolute;left:1014.30px;top:17.54px;font-size:21.5px;font-weight:normal;color:#242424;letter-spacing:0.083px;">Form</div>
<div style="position:absolute;left:1095.60px;top:17.54px;font-size:21.5px;font-weight:normal;color:#242424;letter-spacing:-0.087px;">Help</div>
<div style="position:absolute;left:1176.00px;top:17.54px;font-size:21.5px;font-weight:normal;color:#1c6e42;letter-spacing:-0.485px;">Table Design</div>
<div style="position:absolute;left:46.90px;top:188.17px;font-size:17.6px;font-weight:normal;color:#242424;letter-spacing:-0.290px;">Clipboard</div>
<div style="position:absolute;left:279.00px;top:188.17px;font-size:17.6px;font-weight:normal;color:#242424;letter-spacing:-0.306px;">Font</div>
<div style="position:absolute;left:499.50px;top:188.17px;font-size:17.6px;font-weight:normal;color:#242424;letter-spacing:-0.068px;">Alignment</div>
<div style="position:absolute;left:703.00px;top:188.17px;font-size:17.6px;font-weight:normal;color:#242424;letter-spacing:-0.103px;">Number</div>
<div style="position:absolute;left:963.75px;top:188.17px;font-size:17.6px;font-weight:normal;color:#242424;letter-spacing:-1.283px;">Styles</div>
<div style="position:absolute;left:1331.40px;top:188.17px;font-size:17.6px;font-weight:normal;color:#242424;letter-spacing:-0.759px;">Analysis</div>
<div style="position:absolute;left:1417.20px;top:188.17px;font-size:17.6px;font-weight:normal;color:#242424;letter-spacing:-0.654px;">Funct...</div>
<div style="position:absolute;left:16.00px;top:234.79px;font-size:22px;font-weight:normal;color:#242424;letter-spacing:-1.974px;">B2</div>
<div style="position:absolute;left:352.20px;top:234.79px;font-size:22px;font-weight:normal;color:#242424;letter-spacing:0.321px;">Matrícula</div>
<div style="position:absolute;left:45.20px;top:276.70px;font-size:20px;font-weight:normal;color:#5a5a5a;letter-spacing:0.000px;">A</div>
<div style="position:absolute;left:142.45px;top:276.70px;font-size:20px;font-weight:normal;color:#5a5a5a;letter-spacing:0.000px;">B</div>
<div style="position:absolute;left:301.45px;top:276.70px;font-size:20px;font-weight:normal;color:#5a5a5a;letter-spacing:0.000px;">C</div>
<div style="position:absolute;left:461.20px;top:276.70px;font-size:20px;font-weight:normal;color:#5a5a5a;letter-spacing:0.000px;">D</div>
<div style="position:absolute;left:632.20px;top:276.70px;font-size:20px;font-weight:normal;color:#5a5a5a;letter-spacing:0.000px;">E</div>
<div style="position:absolute;left:802.95px;top:276.70px;font-size:20px;font-weight:normal;color:#5a5a5a;letter-spacing:0.000px;">F</div>
<div style="position:absolute;left:960.95px;top:276.70px;font-size:20px;font-weight:normal;color:#5a5a5a;letter-spacing:0.000px;">G</div>
<div style="position:absolute;left:1059.20px;top:276.70px;font-size:20px;font-weight:normal;color:#5a5a5a;letter-spacing:0.000px;">H</div>
<div style="position:absolute;left:1130.70px;top:276.70px;font-size:20px;font-weight:normal;color:#5a5a5a;letter-spacing:0.000px;">I</div>
<div style="position:absolute;left:1228.20px;top:276.70px;font-size:20px;font-weight:normal;color:#5a5a5a;letter-spacing:0.000px;">J</div>
<div style="position:absolute;left:1324.70px;top:276.70px;font-size:20px;font-weight:normal;color:#5a5a5a;letter-spacing:0.000px;">K</div>
<div style="position:absolute;left:1425.20px;top:276.70px;font-size:20px;font-weight:normal;color:#5a5a5a;letter-spacing:0.000px;">L</div>
<div style="position:absolute;left:10.50px;top:299.65px;font-size:19.5px;font-weight:normal;color:#5a5a5a;letter-spacing:0.000px;">1</div>
<div style="position:absolute;left:11.00px;top:345.35px;font-size:19.5px;font-weight:normal;color:#5a5a5a;letter-spacing:0.000px;">2</div>
<div style="position:absolute;left:11.00px;top:367.79px;font-size:19.5px;font-weight:normal;color:#5a5a5a;letter-spacing:0.000px;">3</div>
<div style="position:absolute;left:10.50px;top:390.23px;font-size:19.5px;font-weight:normal;color:#5a5a5a;letter-spacing:0.000px;">4</div>
<div style="position:absolute;left:10.50px;top:412.67px;font-size:19.5px;font-weight:normal;color:#5a5a5a;letter-spacing:0.000px;">5</div>
<div style="position:absolute;left:11.00px;top:435.11px;font-size:19.5px;font-weight:normal;color:#5a5a5a;letter-spacing:0.000px;">6</div>
<div style="position:absolute;left:10.50px;top:457.55px;font-size:19.5px;font-weight:normal;color:#5a5a5a;letter-spacing:0.000px;">7</div>
<div style="position:absolute;left:11.00px;top:479.99px;font-size:19.5px;font-weight:normal;color:#5a5a5a;letter-spacing:0.000px;">8</div>
<div style="position:absolute;left:11.00px;top:502.43px;font-size:19.5px;font-weight:normal;color:#5a5a5a;letter-spacing:0.000px;">9</div>
<div style="position:absolute;left:4.58px;top:524.87px;font-size:19.5px;font-weight:normal;color:#5a5a5a;letter-spacing:0.000px;">10</div>
<div style="position:absolute;left:5.80px;top:547.31px;font-size:19.5px;font-weight:normal;color:#5a5a5a;letter-spacing:0.000px;">11</div>
<div style="position:absolute;left:5.08px;top:569.75px;font-size:19.5px;font-weight:normal;color:#5a5a5a;letter-spacing:0.000px;">12</div>
<div style="position:absolute;left:5.08px;top:592.19px;font-size:19.5px;font-weight:normal;color:#5a5a5a;letter-spacing:0.000px;">13</div>
<div style="position:absolute;left:4.58px;top:614.63px;font-size:19.5px;font-weight:normal;color:#5a5a5a;letter-spacing:0.000px;">14</div>
<div style="position:absolute;left:4.58px;top:637.07px;font-size:19.5px;font-weight:normal;color:#5a5a5a;letter-spacing:0.000px;">15</div>
<div style="position:absolute;left:5.08px;top:659.51px;font-size:19.5px;font-weight:normal;color:#5a5a5a;letter-spacing:0.000px;">16</div>
<div style="position:absolute;left:5.08px;top:681.95px;font-size:19.5px;font-weight:normal;color:#5a5a5a;letter-spacing:0.000px;">17</div>
<div style="position:absolute;left:5.08px;top:704.39px;font-size:19.5px;font-weight:normal;color:#5a5a5a;letter-spacing:0.000px;">18</div>
<div style="position:absolute;left:5.08px;top:726.83px;font-size:19.5px;font-weight:normal;color:#5a5a5a;letter-spacing:0.000px;">19</div>
<div style="position:absolute;left:108.60px;top:335.93px;font-size:17.2px;font-weight:normal;color:#ffffff;letter-spacing:1.272px;-webkit-text-stroke:0.45px #fff;">Matrícula</div>
<div style="position:absolute;left:435.00px;top:335.93px;font-size:17.2px;font-weight:normal;color:#ffffff;letter-spacing:0.950px;-webkit-text-stroke:0.45px #fff;">Taxa TA</div>
<div style="position:absolute;left:595.50px;top:335.93px;font-size:17.2px;font-weight:normal;color:#ffffff;letter-spacing:1.629px;-webkit-text-stroke:0.45px #fff;">Categoria</div>
<div style="position:absolute;left:772.60px;top:335.93px;font-size:17.2px;font-weight:normal;color:#ffffff;letter-spacing:1.640px;-webkit-text-stroke:0.45px #fff;">Encargo</div>
<div style="position:absolute;left:957.15px;top:335.93px;font-size:17.2px;font-weight:normal;color:#ffffff;letter-spacing:2.978px;-webkit-text-stroke:0.45px #fff;">TA</div>
<div style="position:absolute;left:272.30px;top:325.03px;font-size:17.2px;font-weight:normal;color:#ffffff;letter-spacing:1.717px;-webkit-text-stroke:0.45px #fff;">Valor de</div>
<div style="position:absolute;left:266.20px;top:346.83px;font-size:17.2px;font-weight:normal;color:#ffffff;letter-spacing:1.504px;-webkit-text-stroke:0.45px #fff;">Aquisição</div>
<div style="position:absolute;left:112.47px;top:371.80px;font-size:16.4px;font-weight:normal;color:#4d4d4d;letter-spacing:0.691px;">AB-12-34</div>
<div style="position:absolute;left:274.88px;top:371.80px;font-size:16.4px;font-weight:normal;color:#4d4d4d;letter-spacing:0.637px;">28.000 €</div>
<div style="position:absolute;left:444.14px;top:371.80px;font-size:16.4px;font-weight:normal;color:#4d4d4d;letter-spacing:0.803px;">27,5%</div>
<div style="position:absolute;left:606.64px;top:371.80px;font-size:16.4px;font-weight:normal;color:#4d4d4d;letter-spacing:0.710px;">Seguros</div>
<div style="position:absolute;left:787.57px;top:371.80px;font-size:16.4px;font-weight:normal;color:#4d4d4d;letter-spacing:0.716px;">500 €</div>
<div style="position:absolute;left:946.60px;top:371.80px;font-size:16.4px;font-weight:normal;color:#4d4d4d;letter-spacing:0.698px;">138 €</div>
<div style="position:absolute;left:111.50px;top:394.24px;font-size:16.4px;font-weight:normal;color:#4d4d4d;letter-spacing:0.709px;">CD-56-78</div>
<div style="position:absolute;left:274.88px;top:394.24px;font-size:16.4px;font-weight:normal;color:#4d4d4d;letter-spacing:0.637px;">33.000 €</div>
<div style="position:absolute;left:444.14px;top:394.24px;font-size:16.4px;font-weight:normal;color:#4d4d4d;letter-spacing:0.803px;">27,5%</div>
<div style="position:absolute;left:585.22px;top:394.24px;font-size:16.4px;font-weight:normal;color:#4d4d4d;letter-spacing:0.630px;">Depreciações</div>
<div style="position:absolute;left:780.25px;top:394.24px;font-size:16.4px;font-weight:normal;color:#4d4d4d;letter-spacing:0.637px;">8.250 €</div>
<div style="position:absolute;left:939.75px;top:394.24px;font-size:16.4px;font-weight:normal;color:#4d4d4d;letter-spacing:0.637px;">2.269 €</div>
<div style="position:absolute;left:112.49px;top:416.68px;font-size:16.4px;font-weight:normal;color:#4d4d4d;letter-spacing:0.672px;">EF-90-12</div>
<div style="position:absolute;left:274.88px;top:416.68px;font-size:16.4px;font-weight:normal;color:#4d4d4d;letter-spacing:0.637px;">31.500 €</div>
<div style="position:absolute;left:444.14px;top:416.68px;font-size:16.4px;font-weight:normal;color:#4d4d4d;letter-spacing:0.803px;">27,5%</div>
<div style="position:absolute;left:590.81px;top:416.68px;font-size:16.4px;font-weight:normal;color:#4d4d4d;letter-spacing:0.633px;">Combustível</div>
<div style="position:absolute;left:779.79px;top:416.68px;font-size:16.4px;font-weight:normal;color:#4d4d4d;letter-spacing:0.625px;">1.800 €</div>
<div style="position:absolute;left:947.07px;top:416.68px;font-size:16.4px;font-weight:normal;color:#4d4d4d;letter-spacing:0.716px;">495 €</div>
<div style="position:absolute;left:111.01px;top:439.12px;font-size:16.4px;font-weight:normal;color:#4d4d4d;letter-spacing:0.718px;">GH-34-56</div>
<div style="position:absolute;left:274.88px;top:439.12px;font-size:16.4px;font-weight:normal;color:#4d4d4d;letter-spacing:0.637px;">25.000 €</div>
<div style="position:absolute;left:443.68px;top:439.12px;font-size:16.4px;font-weight:normal;color:#4d4d4d;letter-spacing:0.786px;">10,0%</div>
<div style="position:absolute;left:590.81px;top:439.12px;font-size:16.4px;font-weight:normal;color:#4d4d4d;letter-spacing:0.633px;">Combustível</div>
<div style="position:absolute;left:779.79px;top:439.12px;font-size:16.4px;font-weight:normal;color:#4d4d4d;letter-spacing:0.625px;">1.000 €</div>
<div style="position:absolute;left:946.60px;top:439.12px;font-size:16.4px;font-weight:normal;color:#4d4d4d;letter-spacing:0.698px;">100 €</div>
<div style="position:absolute;left:116.88px;top:461.56px;font-size:16.4px;font-weight:normal;color:#4d4d4d;letter-spacing:0.590px;">IJ-78-90</div>
<div style="position:absolute;left:274.88px;top:461.56px;font-size:16.4px;font-weight:normal;color:#4d4d4d;letter-spacing:0.637px;">35.500 €</div>
<div style="position:absolute;left:444.14px;top:461.56px;font-size:16.4px;font-weight:normal;color:#4d4d4d;letter-spacing:0.803px;">35,0%</div>
<div style="position:absolute;left:587.59px;top:461.56px;font-size:16.4px;font-weight:normal;color:#4d4d4d;letter-spacing:0.675px;">Conservação</div>
<div style="position:absolute;left:779.79px;top:461.56px;font-size:16.4px;font-weight:normal;color:#4d4d4d;letter-spacing:0.625px;">1.500 €</div>
<div style="position:absolute;left:947.07px;top:461.56px;font-size:16.4px;font-weight:normal;color:#4d4d4d;letter-spacing:0.716px;">525 €</div>
<div style="position:absolute;left:112.97px;top:484.00px;font-size:16.4px;font-weight:normal;color:#4d4d4d;letter-spacing:0.663px;">KL-12-34</div>
<div style="position:absolute;left:274.88px;top:484.00px;font-size:16.4px;font-weight:normal;color:#4d4d4d;letter-spacing:0.637px;">29.500 €</div>
<div style="position:absolute;left:444.14px;top:484.00px;font-size:16.4px;font-weight:normal;color:#4d4d4d;letter-spacing:0.803px;">27,5%</div>
<div style="position:absolute;left:595.93px;top:484.00px;font-size:16.4px;font-weight:normal;color:#4d4d4d;letter-spacing:0.708px;">Comissões</div>
<div style="position:absolute;left:787.75px;top:484.00px;font-size:16.4px;font-weight:normal;color:#4d4d4d;letter-spacing:0.677px;">110 €</div>
<div style="position:absolute;left:951.94px;top:484.00px;font-size:16.4px;font-weight:normal;color:#4d4d4d;letter-spacing:0.742px;">30 €</div>
<div style="position:absolute;left:110.42px;top:506.44px;font-size:16.4px;font-weight:normal;color:#4d4d4d;letter-spacing:0.729px;">AA-01-AA</div>
<div style="position:absolute;left:274.88px;top:506.44px;font-size:16.4px;font-weight:normal;color:#4d4d4d;letter-spacing:0.637px;">28.000 €</div>
<div style="position:absolute;left:444.14px;top:506.44px;font-size:16.4px;font-weight:normal;color:#4d4d4d;letter-spacing:0.803px;">27,5%</div>
<div style="position:absolute;left:606.64px;top:506.44px;font-size:16.4px;font-weight:normal;color:#4d4d4d;letter-spacing:0.710px;">Seguros</div>
<div style="position:absolute;left:787.57px;top:506.44px;font-size:16.4px;font-weight:normal;color:#4d4d4d;letter-spacing:0.716px;">500 €</div>
<div style="position:absolute;left:946.60px;top:506.44px;font-size:16.4px;font-weight:normal;color:#4d4d4d;letter-spacing:0.698px;">138 €</div>
<div style="position:absolute;left:109.96px;top:528.88px;font-size:16.4px;font-weight:normal;color:#4d4d4d;letter-spacing:0.719px;">BB-02-BB</div>
<div style="position:absolute;left:274.88px;top:528.88px;font-size:16.4px;font-weight:normal;color:#4d4d4d;letter-spacing:0.637px;">33.000 €</div>
<div style="position:absolute;left:444.14px;top:528.88px;font-size:16.4px;font-weight:normal;color:#4d4d4d;letter-spacing:0.803px;">27,5%</div>
<div style="position:absolute;left:595.93px;top:528.88px;font-size:16.4px;font-weight:normal;color:#4d4d4d;letter-spacing:0.708px;">Comissões</div>
<div style="position:absolute;left:787.57px;top:528.88px;font-size:16.4px;font-weight:normal;color:#4d4d4d;letter-spacing:0.716px;">250 €</div>
<div style="position:absolute;left:951.94px;top:528.88px;font-size:16.4px;font-weight:normal;color:#4d4d4d;letter-spacing:0.742px;">69 €</div>
<div style="position:absolute;left:108.44px;top:551.32px;font-size:16.4px;font-weight:normal;color:#4d4d4d;letter-spacing:0.767px;">CC-03-CC</div>
<div style="position:absolute;left:274.88px;top:551.32px;font-size:16.4px;font-weight:normal;color:#4d4d4d;letter-spacing:0.637px;">31.500 €</div>
<div style="position:absolute;left:444.14px;top:551.32px;font-size:16.4px;font-weight:normal;color:#4d4d4d;letter-spacing:0.803px;">27,5%</div>
<div style="position:absolute;left:587.59px;top:551.32px;font-size:16.4px;font-weight:normal;color:#4d4d4d;letter-spacing:0.675px;">Conservação</div>
<div style="position:absolute;left:787.57px;top:551.32px;font-size:16.4px;font-weight:normal;color:#4d4d4d;letter-spacing:0.716px;">900 €</div>
<div style="position:absolute;left:947.07px;top:551.32px;font-size:16.4px;font-weight:normal;color:#4d4d4d;letter-spacing:0.716px;">248 €</div>
<div style="position:absolute;left:107.97px;top:573.76px;font-size:16.4px;font-weight:normal;color:#4d4d4d;letter-spacing:0.757px;">DD-04-DD</div>
<div style="position:absolute;left:274.88px;top:573.76px;font-size:16.4px;font-weight:normal;color:#4d4d4d;letter-spacing:0.637px;">25.000 €</div>
<div style="position:absolute;left:443.68px;top:573.76px;font-size:16.4px;font-weight:normal;color:#4d4d4d;letter-spacing:0.786px;">10,0%</div>
<div style="position:absolute;left:590.81px;top:573.76px;font-size:16.4px;font-weight:normal;color:#4d4d4d;letter-spacing:0.633px;">Combustível</div>
<div style="position:absolute;left:779.79px;top:573.76px;font-size:16.4px;font-weight:normal;color:#4d4d4d;letter-spacing:0.625px;">1.000 €</div>
<div style="position:absolute;left:946.60px;top:573.76px;font-size:16.4px;font-weight:normal;color:#4d4d4d;letter-spacing:0.698px;">100 €</div>
<div style="position:absolute;left:109.96px;top:596.20px;font-size:16.4px;font-weight:normal;color:#4d4d4d;letter-spacing:0.719px;">EE-05-EE</div>
<div style="position:absolute;left:274.88px;top:596.20px;font-size:16.4px;font-weight:normal;color:#4d4d4d;letter-spacing:0.637px;">35.500 €</div>
<div style="position:absolute;left:444.14px;top:596.20px;font-size:16.4px;font-weight:normal;color:#4d4d4d;letter-spacing:0.803px;">35,0%</div>
<div style="position:absolute;left:587.59px;top:596.20px;font-size:16.4px;font-weight:normal;color:#4d4d4d;letter-spacing:0.675px;">Conservação</div>
<div style="position:absolute;left:779.79px;top:596.20px;font-size:16.4px;font-weight:normal;color:#4d4d4d;letter-spacing:0.625px;">1.500 €</div>
<div style="position:absolute;left:947.07px;top:596.20px;font-size:16.4px;font-weight:normal;color:#4d4d4d;letter-spacing:0.716px;">525 €</div>
<div style="position:absolute;left:111.97px;top:618.64px;font-size:16.4px;font-weight:normal;color:#4d4d4d;letter-spacing:0.682px;">FF-06-FF</div>
<div style="position:absolute;left:274.88px;top:618.64px;font-size:16.4px;font-weight:normal;color:#4d4d4d;letter-spacing:0.637px;">29.500 €</div>
<div style="position:absolute;left:444.14px;top:618.64px;font-size:16.4px;font-weight:normal;color:#4d4d4d;letter-spacing:0.803px;">27,5%</div>
<div style="position:absolute;left:585.22px;top:618.64px;font-size:16.4px;font-weight:normal;color:#4d4d4d;letter-spacing:0.630px;">Depreciações</div>
<div style="position:absolute;left:780.25px;top:618.64px;font-size:16.4px;font-weight:normal;color:#4d4d4d;letter-spacing:0.637px;">7.375 €</div>
<div style="position:absolute;left:939.75px;top:618.64px;font-size:16.4px;font-weight:normal;color:#4d4d4d;letter-spacing:0.637px;">2.028 €</div>
<div style="position:absolute;left:106.97px;top:641.08px;font-size:16.4px;font-weight:normal;color:#4d4d4d;letter-spacing:0.794px;">GG-07-GG</div>
<div style="position:absolute;left:274.88px;top:641.08px;font-size:16.4px;font-weight:normal;color:#4d4d4d;letter-spacing:0.637px;">27.000 €</div>
<div style="position:absolute;left:443.68px;top:641.08px;font-size:16.4px;font-weight:normal;color:#4d4d4d;letter-spacing:0.786px;">10,0%</div>
<div style="position:absolute;left:606.64px;top:641.08px;font-size:16.4px;font-weight:normal;color:#4d4d4d;letter-spacing:0.710px;">Seguros</div>
<div style="position:absolute;left:787.57px;top:641.08px;font-size:16.4px;font-weight:normal;color:#4d4d4d;letter-spacing:0.716px;">350 €</div>
<div style="position:absolute;left:951.94px;top:641.08px;font-size:16.4px;font-weight:normal;color:#4d4d4d;letter-spacing:0.742px;">35 €</div>
<div style="position:absolute;left:108.51px;top:663.52px;font-size:16.4px;font-weight:normal;color:#4d4d4d;letter-spacing:0.747px;">HH-08-HH</div>
<div style="position:absolute;left:274.88px;top:663.52px;font-size:16.4px;font-weight:normal;color:#4d4d4d;letter-spacing:0.637px;">32.800 €</div>
<div style="position:absolute;left:444.14px;top:663.52px;font-size:16.4px;font-weight:normal;color:#4d4d4d;letter-spacing:0.803px;">27,5%</div>
<div style="position:absolute;left:590.81px;top:663.52px;font-size:16.4px;font-weight:normal;color:#4d4d4d;letter-spacing:0.633px;">Combustível</div>
<div style="position:absolute;left:780.25px;top:663.52px;font-size:16.4px;font-weight:normal;color:#4d4d4d;letter-spacing:0.637px;">2.200 €</div>
<div style="position:absolute;left:947.07px;top:663.52px;font-size:16.4px;font-weight:normal;color:#4d4d4d;letter-spacing:0.716px;">605 €</div>
<div style="position:absolute;left:123.94px;top:685.96px;font-size:16.4px;font-weight:normal;color:#4d4d4d;letter-spacing:0.458px;">II-09-II</div>
<div style="position:absolute;left:274.88px;top:685.96px;font-size:16.4px;font-weight:normal;color:#4d4d4d;letter-spacing:0.637px;">30.200 €</div>
<div style="position:absolute;left:444.14px;top:685.96px;font-size:16.4px;font-weight:normal;color:#4d4d4d;letter-spacing:0.803px;">27,5%</div>
<div style="position:absolute;left:585.22px;top:685.96px;font-size:16.4px;font-weight:normal;color:#4d4d4d;letter-spacing:0.630px;">Depreciações</div>
<div style="position:absolute;left:780.25px;top:685.96px;font-size:16.4px;font-weight:normal;color:#4d4d4d;letter-spacing:0.637px;">7.550 €</div>
<div style="position:absolute;left:939.75px;top:685.96px;font-size:16.4px;font-weight:normal;color:#4d4d4d;letter-spacing:0.637px;">2.076 €</div>
<div style="position:absolute;left:116.96px;top:708.40px;font-size:16.4px;font-weight:normal;color:#4d4d4d;letter-spacing:0.607px;">JJ-10-JJ</div>
<div style="position:absolute;left:274.88px;top:708.40px;font-size:16.4px;font-weight:normal;color:#4d4d4d;letter-spacing:0.637px;">34.500 €</div>
<div style="position:absolute;left:444.14px;top:708.40px;font-size:16.4px;font-weight:normal;color:#4d4d4d;letter-spacing:0.803px;">27,5%</div>
<div style="position:absolute;left:595.93px;top:708.40px;font-size:16.4px;font-weight:normal;color:#4d4d4d;letter-spacing:0.708px;">Comissões</div>
<div style="position:absolute;left:787.57px;top:708.40px;font-size:16.4px;font-weight:normal;color:#4d4d4d;letter-spacing:0.716px;">200 €</div>
<div style="position:absolute;left:951.94px;top:708.40px;font-size:16.4px;font-weight:normal;color:#4d4d4d;letter-spacing:0.742px;">55 €</div>
<div style="position:absolute;left:190.45px;top:760.84px;font-size:22.5px;font-weight:normal;color:#242424;letter-spacing:0.231px;-webkit-text-stroke:0.55px #242424;">Viaturas</div>
<div style="position:absolute;left:295.00px;top:231.97px;font-size:26px;font-weight:normal;color:#242424;letter-spacing:3.276px;font-family:'Liberation Serif',serif;font-style:italic;-webkit-text-stroke:0.5px #242424;">fx</div>
<div style="position:absolute;left:39.80px;top:124.81px;font-size:19px;font-weight:normal;color:#242424;letter-spacing:-0.955px;">Paste</div>
<div style="position:absolute;left:195.50px;top:69.62px;font-size:19.2px;font-weight:normal;color:#242424;letter-spacing:-0.277px;">Avenir Next LT P</div>
<div style="position:absolute;left:363.00px;top:69.62px;font-size:19.2px;font-weight:normal;color:#242424;letter-spacing:-0.271px;">10</div>
<div style="position:absolute;left:203.50px;top:108.16px;font-size:20.6px;font-weight:bold;color:#242424;letter-spacing:0.000px;">B</div>
<div style="position:absolute;left:339.70px;top:146.33px;font-size:24.5px;font-weight:normal;color:#242424;letter-spacing:0.000px;">A</div>
<div style="position:absolute;left:594.19px;top:65.77px;font-size:15.5px;font-weight:normal;color:#424242;letter-spacing:0.000px;">ab</div>
<div style="position:absolute;left:594.30px;top:77.17px;font-size:15.5px;font-weight:normal;color:#424242;letter-spacing:0.000px;">c</div>
<div style="position:absolute;left:678.30px;top:69.62px;font-size:19.2px;font-weight:normal;color:#242424;letter-spacing:-0.666px;">General</div>
<div style="position:absolute;left:694.50px;top:148.58px;font-size:14.5px;font-weight:normal;color:#242424;letter-spacing:-0.529px;">.0</div>
<div style="position:absolute;left:684.50px;top:161.88px;font-size:14.5px;font-weight:normal;color:#242424;letter-spacing:0.704px;">.00</div>
<div style="position:absolute;left:727.00px;top:148.58px;font-size:14.5px;font-weight:normal;color:#242424;letter-spacing:0.604px;">.00</div>
<div style="position:absolute;left:736.50px;top:161.88px;font-size:14.5px;font-weight:normal;color:#242424;letter-spacing:-0.229px;">.0</div>
<div style="position:absolute;left:888.50px;top:69.96px;font-size:19.6px;font-weight:normal;color:#242424;letter-spacing:0.170px;">Conditional Formatting</div>
<div style="position:absolute;left:888.50px;top:111.96px;font-size:19.6px;font-weight:normal;color:#242424;letter-spacing:-0.384px;">Format as Table</div>
<div style="position:absolute;left:888.50px;top:153.26px;font-size:19.6px;font-weight:normal;color:#242424;letter-spacing:-0.866px;">Cell Styles</div>
<div style="position:absolute;left:1159.80px;top:119.02px;font-size:19.2px;font-weight:normal;color:#242424;letter-spacing:-0.913px;">Cells</div>
<div style="position:absolute;left:1236.90px;top:119.02px;font-size:19.2px;font-weight:normal;color:#242424;letter-spacing:0.101px;">Editing</div>
<div style="position:absolute;left:1329.00px;top:122.62px;font-size:19.2px;font-weight:normal;color:#242424;letter-spacing:-0.265px;">Analyze</div>
<div style="position:absolute;left:1341.90px;top:147.82px;font-size:19.2px;font-weight:normal;color:#242424;letter-spacing:-0.553px;">Data</div>
<div style="position:absolute;left:1433.20px;top:109.11px;font-size:17px;font-weight:normal;color:#5a5a5a;letter-spacing:0.000px;">a</div>
</body></html>
